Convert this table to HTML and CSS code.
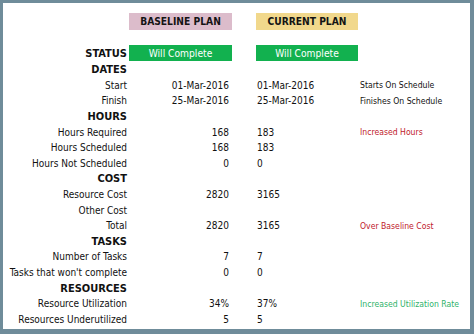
FILE: index.html
```html
<!DOCTYPE html>
<html>
<head>
<meta charset="utf-8">
<link rel="stylesheet" href="styles.css">
</head>
<body>
<div class="frame">
  <div class="row head">
    <div class="lbl"></div>
    <div class="base"><span class="plan pink">BASELINE PLAN</span></div>
    <div class="cur"><span class="plan yellow">CURRENT PLAN</span></div>
    <div class="note"></div>
  </div>
  <div class="row status">
    <div class="lbl sec">STATUS</div>
    <div class="base"><span class="pill">Will Complete</span></div>
    <div class="cur"><span class="pill">Will Complete</span></div>
    <div class="note"></div>
  </div>
  <div class="row"><div class="lbl sec">DATES</div></div>
  <div class="row"><div class="lbl">Start</div><div class="base">01-Mar-2016</div><div class="cur">01-Mar-2016</div><div class="note">Starts On Schedule</div></div>
  <div class="row"><div class="lbl">Finish</div><div class="base">25-Mar-2016</div><div class="cur">25-Mar-2016</div><div class="note">Finishes On Schedule</div></div>
  <div class="row"><div class="lbl sec">HOURS</div></div>
  <div class="row"><div class="lbl">Hours Required</div><div class="base">168</div><div class="cur">183</div><div class="note red">Increased Hours</div></div>
  <div class="row"><div class="lbl">Hours Scheduled</div><div class="base">168</div><div class="cur">183</div></div>
  <div class="row"><div class="lbl">Hours Not Scheduled</div><div class="base">0</div><div class="cur">0</div></div>
  <div class="row"><div class="lbl sec">COST</div></div>
  <div class="row"><div class="lbl">Resource Cost</div><div class="base">2820</div><div class="cur">3165</div></div>
  <div class="row"><div class="lbl">Other Cost</div></div>
  <div class="row"><div class="lbl">Total</div><div class="base">2820</div><div class="cur">3165</div><div class="note red">Over Baseline Cost</div></div>
  <div class="row"><div class="lbl sec">TASKS</div></div>
  <div class="row"><div class="lbl">Number of Tasks</div><div class="base">7</div><div class="cur">7</div></div>
  <div class="row"><div class="lbl">Tasks that won't complete</div><div class="base">0</div><div class="cur">0</div></div>
  <div class="row"><div class="lbl sec">RESOURCES</div></div>
  <div class="row"><div class="lbl">Resource Utilization</div><div class="base">34%</div><div class="cur">37%</div><div class="note green">Increased Utilization Rate</div></div>
  <div class="row"><div class="lbl">Resources Underutilized</div><div class="base">5</div><div class="cur">5</div></div>
</div>
</body>
</html>
```
FILE: styles.css
```css
html, body {
  margin: 0;
  padding: 0;
  background: #ffffff;
}
body {
  width: 474px;
  height: 334px;
  overflow: hidden;
  font-family: "DejaVu Sans Condensed", "DejaVu Sans", sans-serif;
  color: #111111;
}
.frame {
  box-sizing: border-box;
  width: 474px;
  height: 334px;
  border-style: solid;
  border-color: #6f8c9a;
  border-width: 3px 4px 5px 3px;
  background: #ffffff;
  padding-top: 10px;
}
.row {
  display: grid;
  grid-template-columns: 124px 103px 102px 1fr;
  column-gap: 0;
  height: 15.6px;
  align-items: center;
  font-size: 10px;
  white-space: nowrap;
}
.lbl {
  grid-column: 1;
  text-align: right;
  padding-right: 0;
}
.sec {
  font-weight: bold;
  font-size: 11px;
}
.base {
  grid-column: 2;
  margin-left: 2px;
  text-align: right;
  padding-right: 1px;
}
.cur {
  grid-column: 3;
  margin-left: 26px;
  margin-right: -24px;
  padding-left: 1px;
}
.note {
  grid-column: 4;
  margin-left: 28px;
  font-size: 8.6px;
}
.red { color: #c0192c; }
.green { color: #2fb36a; }
.head {
  height: 17px;
  margin-bottom: 15px;
}
.head .base, .head .cur, .status .base, .status .cur {
  padding: 0;
  height: 100%;
}
.plan, .pill {
  display: flex;
  align-items: center;
  justify-content: center;
  height: 100%;
  width: 103px;
  font-size: 10.2px;
}
.plan {
  font-weight: bold;
  color: #141414;
}
.pink { background: #dcbccb; }
.yellow { background: #f1d88c; }
.status {
  height: 16px;
  margin-bottom: 1px;
}
.pill {
  background: #12b14f;
  color: #ffffff;
}
.cur .plan, .cur .pill { width: 102px; }
```
